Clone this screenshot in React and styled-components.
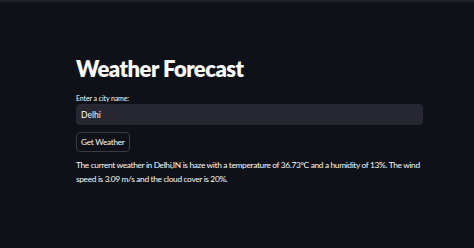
import styled, { createGlobalStyle } from 'styled-components';

const GlobalStyle = createGlobalStyle`
  html, body {
    margin: 0;
    padding: 0;
    background: #0e1117;
  }
  body {
    font-family: Lato, "Noto Sans", sans-serif;
    color: #fafafa;
  }
`;

const App = () => {
  return (
    <Page>
      <GlobalStyle />
      <TopBar />
      <Main>
        <Title>Weather Forecast</Title>
        <Label>Enter a city name:</Label>
        <Input defaultValue="Delhi" />
        <Button>Get Weather</Button>
        <Result>
          The current weather in Delhi,IN is haze with a temperature of 36.73°C and a humidity of 13%. The wind
          speed is 3.09 m/s and the cloud cover is 20%.
        </Result>
      </Main>
    </Page>
  );
}

const Page = styled.div`
  width: 474px;
  height: 248px;
  background: #0e1117;
  overflow: hidden;
`;

const TopBar = styled.div`
  height: 2px;
  background: #1d2025;
`;

const Main = styled.div`
  width: 347px;
  padding: 52px 0 0 76px;
  display: flex;
  flex-direction: column;
  align-items: flex-start;
`;

const Title = styled.h1`
  margin: 0;
  font-size: 22px;
  font-weight: 800;
  line-height: 30px;
  letter-spacing: -0.5px;
`;

const Label = styled.div`
  margin-top: 9px;
  font-size: 7px;
  line-height: 10px;
  letter-spacing: -0.1px;
`;

const Input = styled.input`
  box-sizing: border-box;
  margin-top: 1px;
  width: 347px;
  height: 21px;
  border: 1px solid #262730;
  border-radius: 4px;
  background: #262730;
  color: #fafafa;
  font-family: inherit;
  font-size: 8.5px;
  padding: 0 4px;
  outline: none;
`;

const Button = styled.button`
  margin-top: 7px;
  height: 20px;
  padding: 0 4px;
  border: 1px solid #393b44;
  border-radius: 4px;
  background: #0e1117;
  color: #fafafa;
  font-family: inherit;
  font-size: 8.2px;
  letter-spacing: -0.25px;
`;

const Result = styled.p`
  margin: 6px 0 0;
  font-size: 8.4px;
  line-height: 14px;
  letter-spacing: -0.35px;
  width: 350px;
`;

export default App;
